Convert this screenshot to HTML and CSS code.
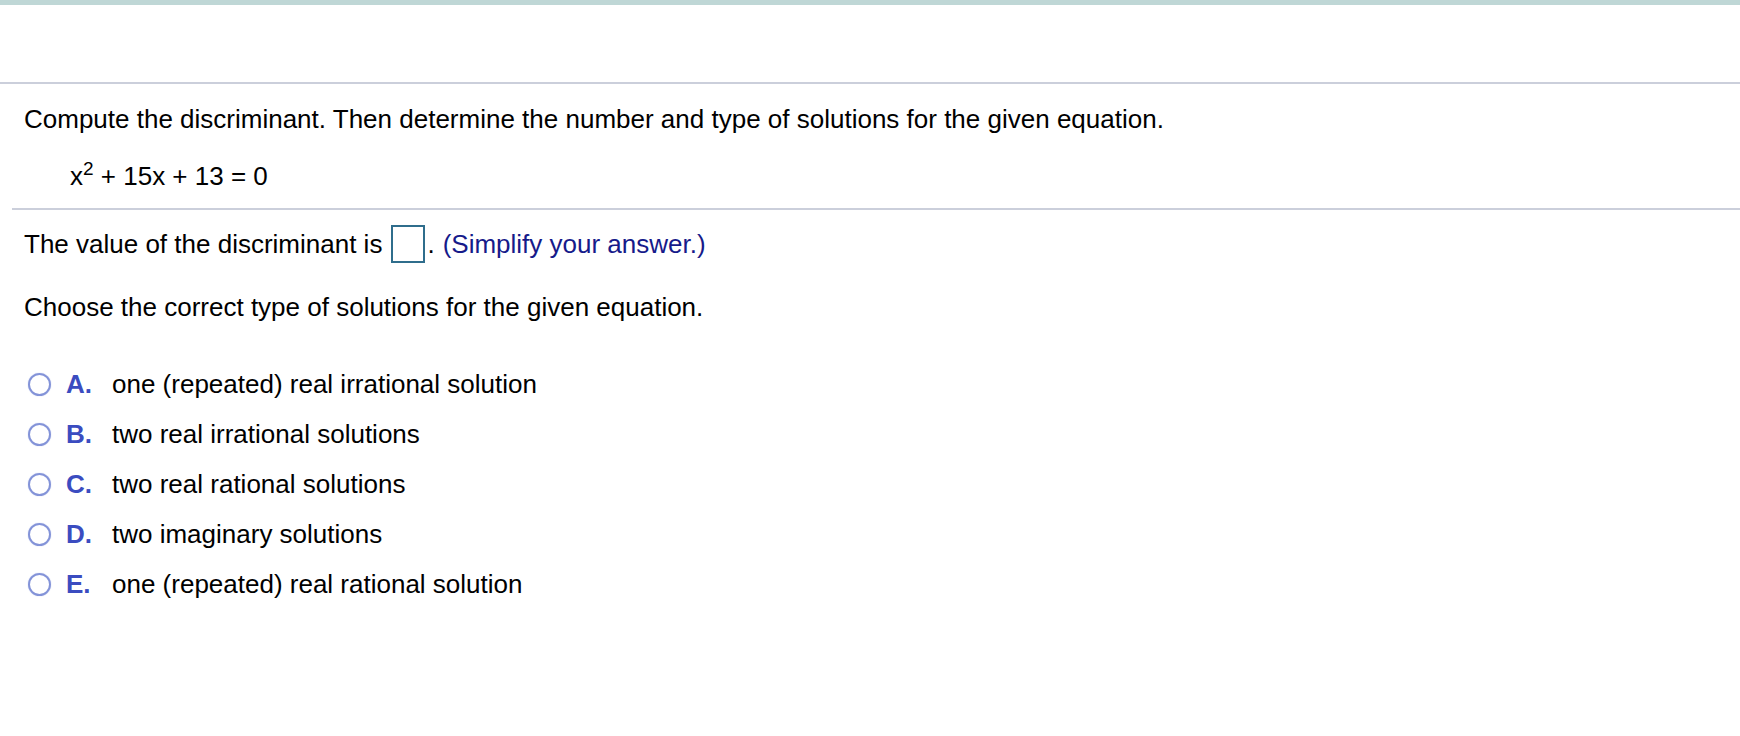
FILE: index.html
```html
<!DOCTYPE html>
<html>
<head>
  <link rel="stylesheet" href="styles.css">
</head>
<body>
  <div class="topbar"></div>
  <div class="header"></div>

  <div class="question">
    <p class="prompt">Compute the discriminant. Then determine the number and type of solutions for the given equation.</p>
    <p class="equation">x<sup>2</sup> + 15x + 13 = 0</p>
  </div>

  <div class="divider"></div>

  <div class="answer">
    <div class="fill-row">
      <span>The value of the discriminant is</span>
      <input type="text" class="answer-box">
      <span>.</span>
      <span class="hint">(Simplify your answer.)</span>
    </div>

    <p class="choose">Choose the correct type of solutions for the given equation.</p>

    <ul class="choices">
      <li><span class="radio"></span><span class="letter">A.</span>one (repeated) real irrational solution</li>
      <li><span class="radio"></span><span class="letter">B.</span>two real irrational solutions</li>
      <li><span class="radio"></span><span class="letter">C.</span>two real rational solutions</li>
      <li><span class="radio"></span><span class="letter">D.</span>two imaginary solutions</li>
      <li><span class="radio"></span><span class="letter">E.</span>one (repeated) real rational solution</li>
    </ul>
  </div>
</body>
</html>
```

FILE: styles.css
```css
body {
  margin: 0;
  font-family: "Liberation Sans", Arial, sans-serif;
  font-size: 26px;
  color: #000;
  background: #fff;
}

.topbar {
  height: 5px;
  background-color: #bfd7d6;
}

.header {
  height: 77px;
  border-bottom: 2px solid #cbcfdb;
}

.question {
  padding-left: 24px;
}

.prompt {
  margin: 20px 0 0;
  line-height: 30px;
}

.equation {
  margin: 27px 0 0 46px;
  line-height: 30px;
}

.equation sup {
  font-size: 19px;
  vertical-align: 10px;
  line-height: 0;
}

.divider {
  margin: 17px 0 0 12px;
  height: 2px;
  background-color: #cbcfdb;
}

.answer {
  padding-left: 24px;
}

.fill-row {
  display: flex;
  align-items: center;
  height: 38px;
  margin-top: 15px;
}

.answer-box {
  width: 30px;
  height: 34px;
  margin: 0 2px 0 9px;
  padding: 0;
  border: 2px solid #2f6d8c;
  background: #fff;
}

.hint {
  color: #161a8a;
  margin-left: 8px;
}

.choose {
  margin: 29px 0 0;
  line-height: 30px;
}

.choices {
  list-style: none;
  margin: 37px 0 0;
  padding: 0;
}

.choices li {
  display: flex;
  align-items: center;
  height: 50px;
}

.radio {
  width: 19px;
  height: 19px;
  margin-left: 4px;
  border: 2px solid #8393d8;
  border-radius: 50%;
  box-shadow: 0 0 1px #a9b5e6;
}

.letter {
  width: 46px;
  margin-left: 15px;
  color: #3b4cc0;
  font-weight: bold;
}
```
